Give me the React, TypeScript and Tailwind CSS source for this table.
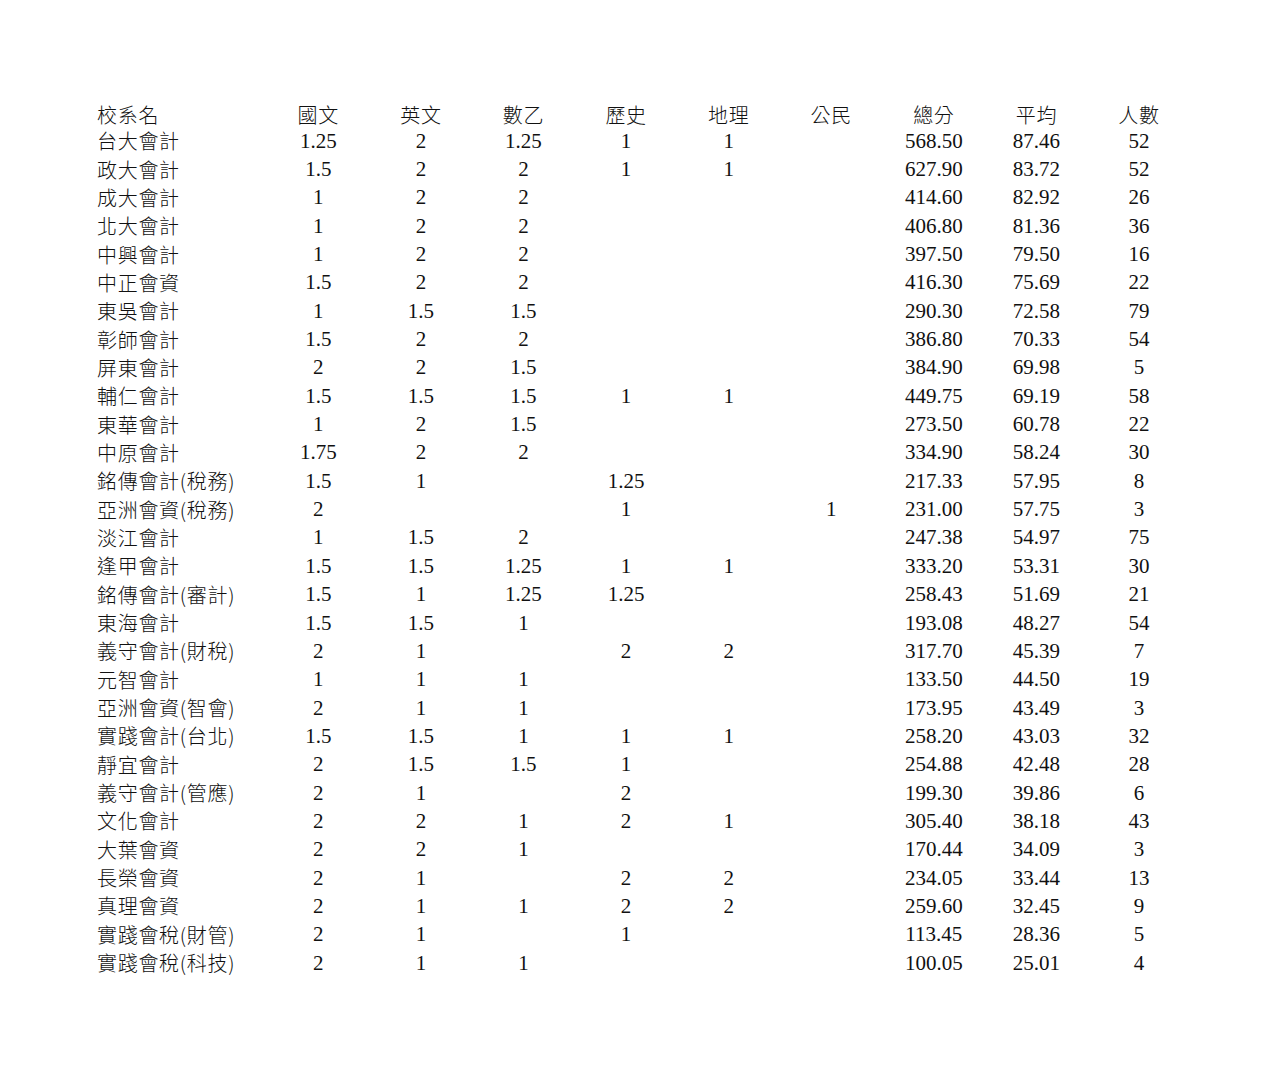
import React from "react";

const rows: string[][] = [
  ["台大會計", "1.25", "2", "1.25", "1", "1", "", "568.50", "87.46", "52"],
  ["政大會計", "1.5", "2", "2", "1", "1", "", "627.90", "83.72", "52"],
  ["成大會計", "1", "2", "2", "", "", "", "414.60", "82.92", "26"],
  ["北大會計", "1", "2", "2", "", "", "", "406.80", "81.36", "36"],
  ["中興會計", "1", "2", "2", "", "", "", "397.50", "79.50", "16"],
  ["中正會資", "1.5", "2", "2", "", "", "", "416.30", "75.69", "22"],
  ["東吳會計", "1", "1.5", "1.5", "", "", "", "290.30", "72.58", "79"],
  ["彰師會計", "1.5", "2", "2", "", "", "", "386.80", "70.33", "54"],
  ["屏東會計", "2", "2", "1.5", "", "", "", "384.90", "69.98", "5"],
  ["輔仁會計", "1.5", "1.5", "1.5", "1", "1", "", "449.75", "69.19", "58"],
  ["東華會計", "1", "2", "1.5", "", "", "", "273.50", "60.78", "22"],
  ["中原會計", "1.75", "2", "2", "", "", "", "334.90", "58.24", "30"],
  ["銘傳會計(稅務)", "1.5", "1", "", "1.25", "", "", "217.33", "57.95", "8"],
  ["亞洲會資(稅務)", "2", "", "", "1", "", "1", "231.00", "57.75", "3"],
  ["淡江會計", "1", "1.5", "2", "", "", "", "247.38", "54.97", "75"],
  ["逢甲會計", "1.5", "1.5", "1.25", "1", "1", "", "333.20", "53.31", "30"],
  ["銘傳會計(審計)", "1.5", "1", "1.25", "1.25", "", "", "258.43", "51.69", "21"],
  ["東海會計", "1.5", "1.5", "1", "", "", "", "193.08", "48.27", "54"],
  ["義守會計(財稅)", "2", "1", "", "2", "2", "", "317.70", "45.39", "7"],
  ["元智會計", "1", "1", "1", "", "", "", "133.50", "44.50", "19"],
  ["亞洲會資(智會)", "2", "1", "1", "", "", "", "173.95", "43.49", "3"],
  ["實踐會計(台北)", "1.5", "1.5", "1", "1", "1", "", "258.20", "43.03", "32"],
  ["靜宜會計", "2", "1.5", "1.5", "1", "", "", "254.88", "42.48", "28"],
  ["義守會計(管應)", "2", "1", "", "2", "", "", "199.30", "39.86", "6"],
  ["文化會計", "2", "2", "1", "2", "1", "", "305.40", "38.18", "43"],
  ["大葉會資", "2", "2", "1", "", "", "", "170.44", "34.09", "3"],
  ["長榮會資", "2", "1", "", "2", "2", "", "234.05", "33.44", "13"],
  ["真理會資", "2", "1", "1", "2", "2", "", "259.60", "32.45", "9"],
  ["實踐會稅(財管)", "2", "1", "", "1", "", "", "113.45", "28.36", "5"],
  ["實踐會稅(科技)", "2", "1", "1", "", "", "", "100.05", "25.01", "4"],
];

const headers = ["國文", "英文", "數乙", "歷史", "地理", "公民", "總分", "平均", "人數"];

const cjk = { fontFamily: '"Noto Sans CJK TC", "Noto Sans", sans-serif' };
const serif = { fontFamily: '"Liberation Serif", "Times New Roman", serif' };

export default function App() {
  return (
    <div className="w-[1280px] h-[1074px] bg-white text-[#111]">
      <div className="pt-[102px] pl-[97px]">
        <div className="grid grid-cols-[170px_repeat(9,102.6px)] h-[25px] items-center">
          <div className="text-[20px] leading-none tracking-[0.7px] font-light" style={cjk}>校系名</div>
          {headers.map((h) => (
            <div key={h} className="text-center text-[20px] leading-none tracking-[0.7px] font-light" style={cjk}>
              {h}
            </div>
          ))}
        </div>
        {rows.map((r, i) => (
          <div key={i} className="grid grid-cols-[170px_repeat(9,102.6px)] h-[28.35px] items-center">
            <div className="text-[20px] leading-none whitespace-nowrap tracking-[0.7px] font-light" style={cjk}>{r[0]}</div>
            {r.slice(1).map((v, j) => (
              <div key={j} className="text-center text-[21px] leading-none" style={serif}>
                {v}
              </div>
            ))}
          </div>
        ))}
      </div>
    </div>
  );
}
